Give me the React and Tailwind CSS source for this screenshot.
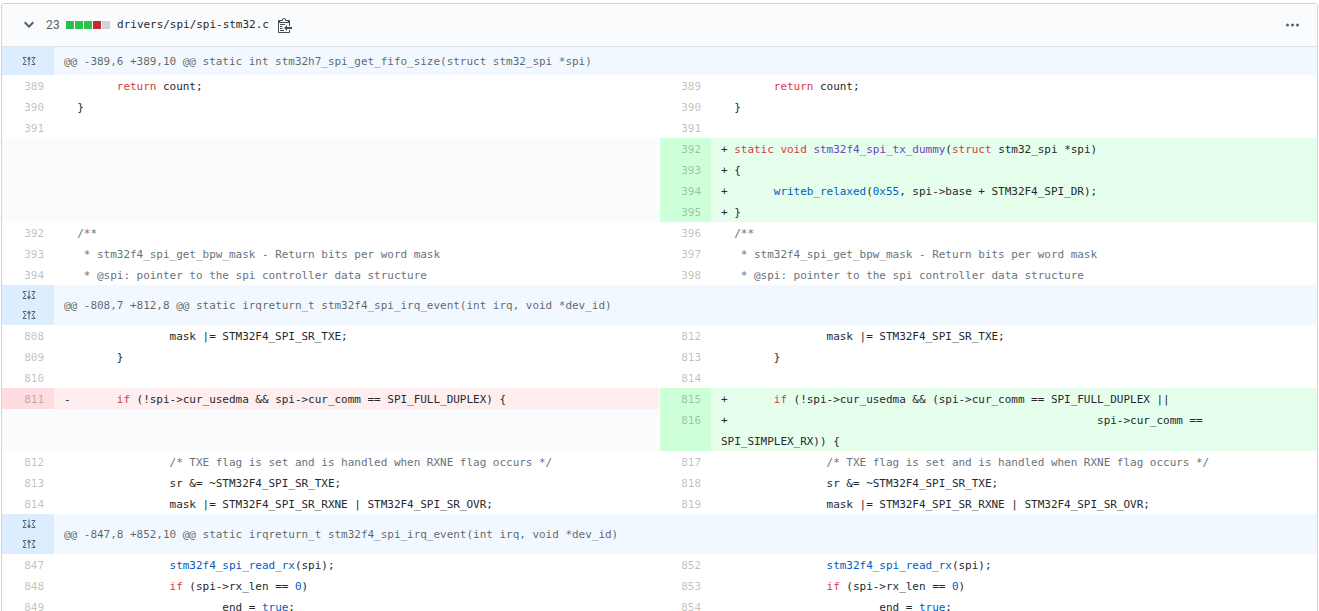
const K = ({ children }) => <span className="text-[#d73a49]">{children}</span>;
const F = ({ children }) => <span className="text-[#6f42c1]">{children}</span>;
const B = ({ children }) => <span className="text-[#005cc5]">{children}</span>;
const C = ({ children }) => <span className="text-[#6a737d]">{children}</span>;

function Fold({ dir }) {
  return (
    <svg width="14" height="14" viewBox="0 0 14 14" className="block text-[#586069]" fill="none" stroke="currentColor" strokeWidth="1">
      <path d="M4.500 3.500H1L3.500 7 1 10.500H4.500" />
      <path d="M9.500 3.500H13L10.500 7 13 10.500H9.500" />
      {dir === "up" ? (
        <>
          <path d="M7 5v6.500" />
          <path d="M7 2.500l2.200 3H4.800z" fill="currentColor" stroke="none" />
        </>
      ) : (
        <>
          <path d="M7 2.500V9" />
          <path d="M7 11.500l2.200-3H4.800z" fill="currentColor" stroke="none" />
        </>
      )}
    </svg>
  );
}

function Gutter({ n, kind, right }) {
  const bg =
    kind === "add" ? "bg-[#cdffd8]" : kind === "del" ? "bg-[#ffdce0]" : kind === "empty" ? "bg-[#fafbfc]" : "bg-white";
  return (
    <div className={`${right ? "w-[51px]" : "w-[52px]"} shrink-0 pr-[10px] text-right text-[rgba(27,31,35,0.3)] ${bg}`}>
      <div className="translate-y-px">{n}</div>
    </div>
  );
}

function Side({ n, kind, right, children }) {
  const bg =
    kind === "add" ? "bg-[#e6ffed]" : kind === "del" ? "bg-[#ffeef0]" : kind === "empty" ? "bg-[#fafbfc]" : "bg-white";
  return (
    <div className="flex min-w-0 flex-1 basis-0">
      <Gutter n={n} kind={kind} right={right} />
      <div className={`min-w-0 flex-1 whitespace-pre-wrap break-words px-[10px] text-[#24292e] [tab-size:8] ${bg}`}>
        <div className="translate-y-px">{children}</div>
      </div>
    </div>
  );
}

function Row({ left, right }) {
  return (
    <div className="flex min-h-[21px] leading-[21px]">
      <Side n={left?.n} kind={left?.kind}>
        {left?.c}
      </Side>
      <div className="w-px shrink-0 bg-white" />
      <Side right n={right?.n} kind={right?.kind}>
        {right?.c}
      </Side>
    </div>
  );
}

function Same({ l, r, children }) {
  return <Row left={{ n: l, c: children }} right={{ n: r, c: children }} />;
}

function Hunk({ text, tall }) {
  return (
    <div className={`flex bg-[#f1f8ff] ${tall ? "h-10" : "h-[28px]"}`}>
      <div className="flex w-[52px] shrink-0 flex-col items-center justify-center bg-[#dbedff] pl-[2px]">
        {tall ? (
          <>
            <div className="flex h-5 items-center"><Fold dir="down" /></div>
            <div className="flex h-5 items-center"><Fold dir="up" /></div>
          </>
        ) : (
          <Fold dir="up" />
        )}
      </div>
      <div className="flex translate-y-px items-center whitespace-pre px-[10px] text-[rgba(27,31,35,0.7)]">{text}</div>
    </div>
  );
}

export default function App() {
  return (
    <div className="h-[611px] overflow-hidden bg-white pl-[1px] pr-[1px] pt-[3px] font-['DejaVu_Sans_Mono','Liberation_Mono',monospace] text-[11px] tracking-[-0.025px]">
      <div className="rounded-t-[3px] border border-b-0 border-[#d1d5da]">
        <div className="flex h-[43px] items-center border-b border-[#e1e4e8] bg-[#fafbfc] pl-[21px] pr-[18px] text-[#24292e]">
          <svg width="12" height="16" viewBox="0 0 10 16" className="text-[#586069]" fill="currentColor">
            <path d="M5 11L0 6l1.500-1.500L5 8.250 8.500 4.500 10 6l-5 5z" />
          </svg>
          <span className="ml-[11px] font-['Roboto','Liberation_Sans',sans-serif] text-[12px] tracking-[0.3px] text-[#586069]">23</span>
          <span className="ml-[6px] flex gap-px">
            <i className="block h-2 w-2 bg-[#2cbe4e]" />
            <i className="block h-2 w-2 bg-[#2cbe4e]" />
            <i className="block h-2 w-2 bg-[#2cbe4e]" />
            <i className="block h-2 w-2 bg-[#cb2431]" />
            <i className="block h-2 w-2 bg-[#d1d5da]" />
          </span>
          <span className="ml-[7px]">drivers/spi/spi-stm32.c</span>
          <svg width="14" height="16" viewBox="0 0 14 16" className="ml-[9px] text-[#444d56]" fill="currentColor">
            <path d="M2 13h4v1H2v-1zm5-6H2v1h5V7zm2 3V8l-3 3 3 3v-2h5v-2H9zM4.500 9H2v1h2.500V9zM2 12h2.500v-1H2v1zm9 1h1v2c-.02.280-.110.520-.300.700-.190.180-.420.280-.700.300H1c-.550 0-1-.450-1-1V4c0-.550.450-1 1-1h3c0-1.110.890-2 2-2 1.110 0 2 .890 2 2h3c.550 0 1 .450 1 1v5h-1V6H1v9h10v-2zM2 5h8c0-.550-.450-1-1-1H8c-.550 0-1-.450-1-1s-.450-1-1-1-1 .450-1 1-.450 1-1 1H3c-.550 0-1 .450-1 1z" />
          </svg>
          <svg width="13" height="16" viewBox="0 0 13 16" className="ml-auto text-[#586069]" fill="currentColor">
            <path d="M1.500 9.500a1.500 1.500 0 1 0 0-3 1.500 1.500 0 0 0 0 3zm5 0a1.500 1.500 0 1 0 0-3 1.500 1.500 0 0 0 0 3zm5 0a1.500 1.500 0 1 0 0-3 1.500 1.500 0 0 0 0 3z" />
          </svg>
        </div>

        <Hunk text="@@ -389,6 +389,10 @@ static int stm32h7_spi_get_fifo_size(struct stm32_spi *spi)" />
        <Same l="389" r="389"> 	<K>return</K> count;</Same>
        <Same l="390" r="390">  {"}"}</Same>
        <Same l="391" r="391"> </Same>
        <Row left={{ kind: "empty" }} right={{ n: "392", kind: "add", c: <>+ <K>static</K> <K>void</K> <F>stm32f4_spi_tx_dummy</F>(<K>struct</K> stm32_spi *spi)</> }} />
        <Row left={{ kind: "empty" }} right={{ n: "393", kind: "add", c: "+ {" }} />
        <Row left={{ kind: "empty" }} right={{ n: "394", kind: "add", c: <>+	<B>writeb_relaxed</B>(<B>0x55</B>, spi-&gt;base + STM32F4_SPI_DR);</> }} />
        <Row left={{ kind: "empty" }} right={{ n: "395", kind: "add", c: "+ }" }} />
        <Same l="392" r="396">  <C>/**</C></Same>
        <Same l="393" r="397">   <C>* stm32f4_spi_get_bpw_mask - Return bits per word mask</C></Same>
        <Same l="394" r="398">   <C>* @spi: pointer to the spi controller data structure</C></Same>

        <Hunk tall text="@@ -808,7 +812,8 @@ static irqreturn_t stm32f4_spi_irq_event(int irq, void *dev_id)" />
        <Same l="808" r="812"> 		mask |= STM32F4_SPI_SR_TXE;</Same>
        <Same l="809" r="813"> 	{"}"}</Same>
        <Same l="810" r="814"> </Same>
        <Row
          left={{ n: "811", kind: "del", c: <>-	<K>if</K> (!spi-&gt;cur_usedma &amp;&amp; spi-&gt;cur_comm == SPI_FULL_DUPLEX) {"{"}</> }}
          right={{ n: "815", kind: "add", c: <>+	<K>if</K> (!spi-&gt;cur_usedma &amp;&amp; (spi-&gt;cur_comm == SPI_FULL_DUPLEX ||</> }}
        />
        <Row
          left={{ kind: "empty" }}
          right={{ n: "816", kind: "add", c: "+							 spi->cur_comm == SPI_SIMPLEX_RX)) {" }}
        />
        <Same l="812" r="817"> 		<C>/* TXE flag is set and is handled when RXNE flag occurs */</C></Same>
        <Same l="813" r="818"> 		sr &amp;= ~STM32F4_SPI_SR_TXE;</Same>
        <Same l="814" r="819"> 		mask |= STM32F4_SPI_SR_RXNE | STM32F4_SPI_SR_OVR;</Same>

        <Hunk tall text="@@ -847,8 +852,10 @@ static irqreturn_t stm32f4_spi_irq_event(int irq, void *dev_id)" />
        <Same l="847" r="852"> 		<B>stm32f4_spi_read_rx</B>(spi);</Same>
        <Same l="848" r="853"> 		<K>if</K> (spi-&gt;rx_len == <B>0</B>)</Same>
        <Same l="849" r="854"> 			end = <B>true</B>;</Same>
      </div>
    </div>
  );
}
